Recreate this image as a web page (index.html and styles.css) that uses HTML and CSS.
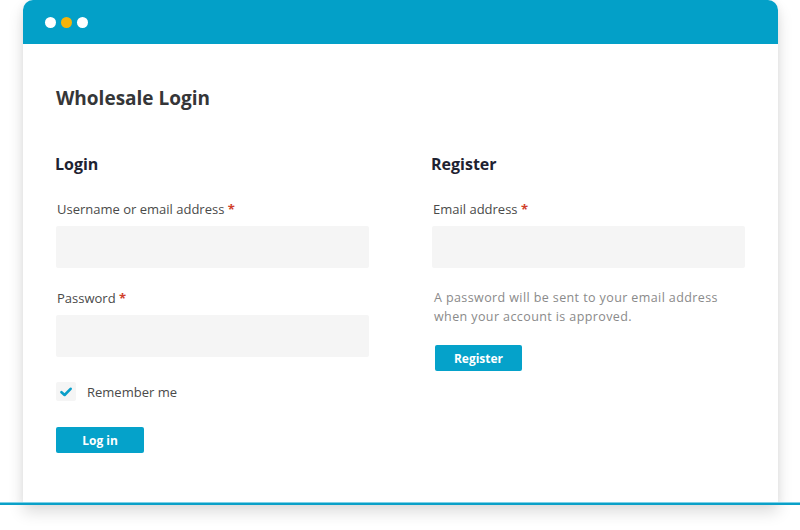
FILE: index.html
```html
<!DOCTYPE html>
<html lang="en">
<head>
<meta charset="utf-8">
<title>Wholesale Login</title>
<link rel="stylesheet" href="styles.css">
</head>
<body>
<div class="stage">
  <div class="window">
    <div class="titlebar">
      <span class="dot"></span><span class="dot dot-yellow"></span><span class="dot"></span>
    </div>
    <div class="content">
      <h1 class="page-title">Wholesale Login</h1>
      <div class="columns">
        <form class="col">
          <h2 class="col-title">Login</h2>
          <label class="field-label">Username or email address <span class="req">*</span></label>
          <div class="input"></div>
          <label class="field-label field-gap">Password <span class="req">*</span></label>
          <div class="input"></div>
          <div class="remember">
            <span class="checkbox">
              <svg width="12" height="10" viewBox="0 0 12 10"><path d="M1.5 5.2 L4.6 8 L10.6 1.8" fill="none" stroke="#0a9fc9" stroke-width="2.6" stroke-linecap="round" stroke-linejoin="round"/></svg>
            </span>
            <span class="remember-text">Remember me</span>
          </div>
          <span class="btn btn-login">Log in</span>
        </form>
        <form class="col">
          <h2 class="col-title">Register</h2>
          <label class="field-label">Email address <span class="req">*</span></label>
          <div class="input"></div>
          <p class="help">A password will be sent to your email address when your account is approved.</p>
          <span class="btn btn-register">Register</span>
        </form>
      </div>
    </div>
  </div>
  <div class="baseline"></div>
</div>
</body>
</html>
```
FILE: styles.css
```css
* { box-sizing: border-box; }
html, body { margin: 0; padding: 0; background: #ffffff; }
body {
  width: 800px;
  height: 530px;
  overflow: hidden;
  font-family: "Open Sans", "DejaVu Sans", sans-serif;
}
.stage {
  position: relative;
  width: 800px;
  height: 530px;
}
.window {
  margin-left: 23px;
  width: 755px;
  height: 503px;
  background: #ffffff;
  border-radius: 10px 10px 0 0;
  box-shadow: 0 9px 16px rgba(0, 0, 0, 0.14), 0 0 8px rgba(0, 0, 0, 0.05);
  overflow: hidden;
}
.titlebar {
  height: 44px;
  background: #03a0c8;
  display: flex;
  align-items: center;
  gap: 5px;
  padding-left: 22px;
}
.dot {
  width: 11px;
  height: 11px;
  border-radius: 50%;
  background: #ffffff;
}
.dot-yellow { background: #f6b40a; }
.content {
  padding: 42px 32px 0 33px;
}
.page-title {
  margin: 0;
  font-size: 19px;
  line-height: 24px;
  font-weight: 700;
  color: #353638;
}
.columns {
  display: grid;
  grid-template-columns: 313px 313px;
  column-gap: 63px;
  margin-top: 44px;
}
.col { display: flex; flex-direction: column; align-items: flex-start; margin: 0; }
.col-title {
  margin: 0 0 26px -1px;
  font-size: 16px;
  line-height: 20px;
  font-weight: 700;
  color: #1e2231;
}
.field-label {
  display: block;
  margin-left: 1px;
  font-size: 13px;
  line-height: 18px;
  color: #4a4a4a;
  margin-bottom: 8px;
}
.field-gap { margin-top: 21px; }
.req { color: #d0402b; font-weight: 700; }
.input {
  width: 313px;
  height: 42px;
  background: #f5f5f5;
  border-radius: 2px;
}
.remember {
  display: flex;
  align-items: center;
  margin-top: 25px;
}
.checkbox {
  width: 20px;
  height: 19px;
  background: #f5f5f5;
  border-radius: 2px;
  display: flex;
  align-items: center;
  justify-content: center;
}
.remember-text {
  margin-left: 11px;
  font-size: 13px;
  color: #4a4a4a;
}
.btn {
  display: flex;
  align-items: center;
  justify-content: center;
  height: 26px;
  background: #05a2ca;
  color: #ffffff;
  font-size: 12px;
  font-weight: 700;
  border-radius: 2px;
}
.btn-login { width: 88px; margin-top: 26px; }
.btn-register { width: 87px; margin-top: 19px; margin-left: 3px; }
.help {
  margin: 20px 0 0 2px;
  font-size: 12.5px;
  line-height: 19px;
  letter-spacing: 0.4px;
  color: #8a8a8a;
  max-width: 292px;
}
.baseline {
  position: absolute;
  left: 0;
  top: 502px;
  width: 800px;
  height: 3px;
  background: #0aa0c8;
  border-top: 1px solid #7fd0e6;
}
```
